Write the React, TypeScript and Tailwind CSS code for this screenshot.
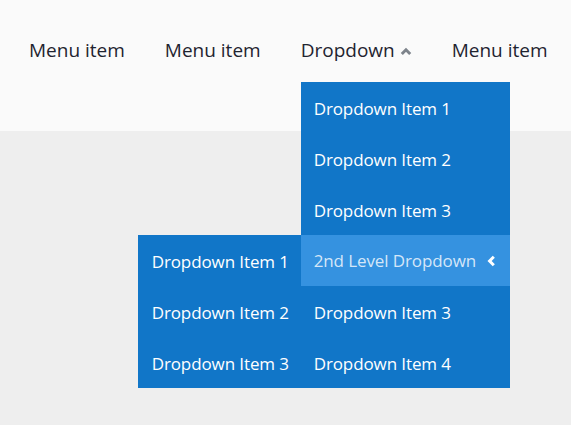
import React from "react";

const font = { fontFamily: '"Open Sans", "Noto Sans", sans-serif' };

function ChevronUp() {
  return (
    <svg width="12" height="9" viewBox="0 0 12 9" className="ml-[5px] mt-[3px]">
      <path d="M1.8 7 L6 2.8 L10.2 7" fill="none" stroke="#7d838b" strokeWidth="3" />
    </svg>
  );
}

function ChevronLeft() {
  return (
    <svg width="9" height="12" viewBox="0 0 9 12">
      <path d="M6.8 1.8 L2.6 6 L6.8 10.2" fill="none" stroke="#ffffff" strokeWidth="3" />
    </svg>
  );
}

const firstLevel = ["Dropdown Item 1", "Dropdown Item 2", "Dropdown Item 3"];
const firstLevelTail = ["Dropdown Item 3", "Dropdown Item 4"];
const secondLevel = ["Dropdown Item 1", "Dropdown Item 2", "Dropdown Item 3"];

export default function App() {
  return (
    <div className="min-h-screen bg-[#eeeeee]" style={font}>
      <nav className="h-[131px] bg-[#fafafa]">
        <ul className="flex pl-[9px] pt-[36px] text-[19px] leading-[28px] text-[#1f2430]">
          <li className="px-5">Menu item</li>
          <li className="px-5">Menu item</li>
          <li className="relative px-5">
            <span className="flex items-center">
              Dropdown
              <ChevronUp />
            </span>
            <ul className="absolute left-5 top-[46px] w-[209px] bg-[#1176c8] text-[17px] leading-[53px] tracking-[-0.1px] text-white">
              {firstLevel.map((item) => (
                <li key={item} className="h-[51px] pl-[13px] whitespace-nowrap">
                  {item}
                </li>
              ))}
              <li className="relative flex h-[51px] items-center justify-between bg-[#3592e0] pl-[13px] pr-[14px] text-[#d4e6f8]">
                <span className="whitespace-nowrap">2nd Level Dropdown</span>
                <ChevronLeft />
                <ul className="absolute right-full top-0 w-[163px] bg-[#1176c8] text-white">
                  {secondLevel.map((item) => (
                    <li key={item} className="h-[51px] pl-[14px] whitespace-nowrap">
                      {item}
                    </li>
                  ))}
                </ul>
              </li>
              {firstLevelTail.map((item) => (
                <li key={item} className="h-[51px] pl-[13px] whitespace-nowrap">
                  {item}
                </li>
              ))}
            </ul>
          </li>
          <li className="px-5">Menu item</li>
        </ul>
      </nav>
    </div>
  );
}
